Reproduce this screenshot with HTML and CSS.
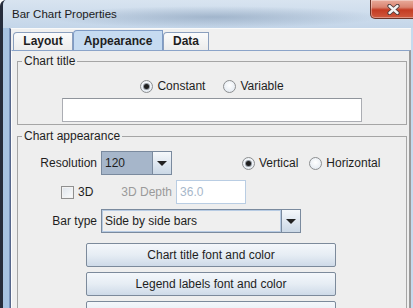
FILE: index.html
```html
<!DOCTYPE html>
<html lang="en">
<head>
    <meta charset="UTF-8">
    <title>Bar Chart Properties</title>
    <link rel="stylesheet" href="styles.css">
</head>
<body>
    <div class="window">
        <div class="titlebar">
            <span class="title">Bar Chart Properties</span>
            <button class="close" type="button">
                <svg width="13" height="11" viewBox="0 0 13 11">
                    <path d="M2.5 2 L10.5 9 M10.5 2 L2.5 9" stroke="#4a3a3a" stroke-width="4.2" stroke-linecap="round"/>
                    <path d="M2.5 2 L10.5 9 M10.5 2 L2.5 9" stroke="#f4f4f4" stroke-width="2.4" stroke-linecap="round"/>
                </svg>
            </button>
        </div>

        <div class="client">
            <div class="tabs">
                <div class="tab tab-layout">Layout</div>
                <div class="tab tab-appearance selected">Appearance</div>
                <div class="tab tab-data">Data</div>
            </div>

            <div class="pane">
                <fieldset class="group">
                    <legend>Chart title</legend>
                    <div class="radio-row">
                        <span class="opt"><span class="radio checked"></span>Constant</span>
                        <span class="opt"><span class="radio"></span>Variable</span>
                    </div>
                    <div class="title-field"></div>
                </fieldset>

                <fieldset class="group group-appearance">
                    <legend>Chart appearance</legend>

                    <div class="row row-res">
                        <span class="label">Resolution</span>
                        <div class="combo combo-res">
                            <span class="value">120</span>
                            <span class="arrow"></span>
                        </div>
                        <div class="orient">
                            <span class="opt"><span class="radio checked"></span>Vertical</span>
                            <span class="opt"><span class="radio"></span>Horizontal</span>
                        </div>
                    </div>

                    <div class="row row-3d">
                        <span class="check"></span>
                        <span class="check-label">3D</span>
                        <span class="depth-label">3D Depth</span>
                        <div class="depth-field">36.0</div>
                    </div>

                    <div class="row row-bar">
                        <span class="label">Bar type</span>
                        <div class="combo combo-bar">
                            <span class="value">Side by side bars</span>
                            <span class="arrow"></span>
                        </div>
                    </div>

                    <div class="buttons">
                        <button class="btn" type="button">Chart title font and color</button>
                        <button class="btn" type="button">Legend labels font and color</button>
                        <!-- next button is cut off by the window edge -->
                        <button class="btn" type="button"></button>
                    </div>
                </fieldset>
            </div>
        </div>
    </div>
</body>
</html>
```

FILE: styles.css
```css
* {
    box-sizing: border-box;
}
body {
    margin: 0;
    font-family: "Liberation Sans", Arial, sans-serif;
    font-size: 12px;
    color: #1e1e1e;
}
.window {
    width: 413px;
    height: 308px;
    overflow: hidden;
    border-left: 3px solid #262d3c;
    border-top-left-radius: 6px;
    background: linear-gradient(to right, #a6c3e2, #bcd3ea 30%, #c6daee);
}
.titlebar {
    height: 28px;
    display: flex;
    align-items: flex-start;
    background:
        radial-gradient(ellipse 170px 11px at 210px 17px, rgba(110,135,165,0.45), rgba(110,135,165,0)),
        linear-gradient(#d8e4f0, #c4d6e9);
}
.title {
    padding: 8px 0 0 9px;
    font-size: 11.5px;
    color: #1b1b1b;
}
.close {
    margin-left: auto;
    margin-right: -4px;
    width: 47px;
    height: 19px;
    padding: 0;
    display: flex;
    align-items: center;
    justify-content: center;
    border: 1px solid #6a3429;
    border-top: none;
    border-radius: 0 0 5px 5px;
    background: linear-gradient(#e9ab9b, #d98470 40%, #c43b22 55%, #cf5a3f);
    box-shadow: inset 0 0 0 1px rgba(255,255,255,0.35);
}
.client {
    margin-left: 7px;
    width: 401px;
    height: 280px;
    background: #f0f0f0;
    border-left: 1px solid #56668a;
    border-top: 1px solid #fafafa;
    box-shadow: -1px 0 0 #7995bd;
    padding-top: 1px;
}
.tabs {
    display: flex;
    align-items: flex-end;
    height: 20px;
    padding-left: 2px;
}
.tab {
    height: 18px;
    line-height: 17px;
    text-align: center;
    font-weight: bold;
    border: 1px solid #8b9fbd;
    border-bottom: none;
    border-top-left-radius: 4px;
    background: linear-gradient(#fbfbfb, #ececec);
}
.tab-layout {
    width: 60px;
}
.tab-appearance {
    width: 90px;
}
.tab-data {
    width: 46px;
}
.tab.selected {
    height: 20px;
    padding-top: 2px;
    background: #c6dbf1;
    border-color: #7f9bc5;
}
.pane {
    height: 258px;
    border-top: 1px solid #8ba4c9;
    border-left: 1px solid #fdfdfd;
    border-right: 2px solid #9a9a9a;
    padding: 3px 2px 0 5px;
    background: #eeeeee;
}
.group {
    margin: 0;
    padding: 0;
    width: 390px;
    border: 1px solid #a5a5a5;
}
.group legend {
    margin-left: 4px;
    padding: 0 2px;
    line-height: 14px;
}
.group-appearance {
    margin-top: 4px;
}
.radio-row {
    display: flex;
    justify-content: center;
    gap: 18px;
    margin-top: 10px;
    height: 16px;
}
.opt {
    display: flex;
    align-items: center;
    gap: 4px;
}
.radio {
    flex: none;
    width: 13px;
    height: 13px;
    border-radius: 50%;
    border: 1px solid #8c8e90;
    background: radial-gradient(circle at 50% 40%, #ffffff, #dde5ee);
    display: flex;
    align-items: center;
    justify-content: center;
}
.radio.checked::after {
    content: "";
    width: 5px;
    height: 5px;
    border-radius: 50%;
    background: #1e1e1e;
    box-shadow: 0 0 0 1px #8f979f;
}
.title-field {
    width: 300px;
    height: 24px;
    margin: 4px auto 2px;
    border: 1px solid #abadb3;
    border-top-color: #8f949b;
    background: #ffffff;
}
.row {
    display: flex;
    align-items: center;
    height: 24px;
    margin-top: 5px;
}
.row-res {
    margin-top: 8px;
}
.label {
    width: 79px;
    margin-right: 4px;
    text-align: right;
}
.combo {
    display: flex;
    height: 24px;
    border: 1px solid #7a8a9e;
}
.combo .value {
    flex: 1;
    padding-left: 3px;
    line-height: 22px;
}
.combo-res {
    width: 71px;
}
.combo-res .value {
    background: #a6b6ca;
}
.combo-bar {
    width: 200px;
}
.combo-bar .value {
    background: #efefef;
    box-shadow: inset 0 0 0 1px #b7cbe3;
}
.arrow {
    width: 19px;
    border-left: 1px solid #7a8a9e;
    background: linear-gradient(#f5f8fb, #cbd8e6);
    display: flex;
    align-items: center;
    justify-content: center;
}
.arrow::before {
    content: "";
    border-left: 5px solid transparent;
    border-right: 5px solid transparent;
    border-top: 5px solid #222;
}
.orient {
    display: flex;
    gap: 11px;
    margin-left: 70px;
}
.check {
    width: 13px;
    height: 13px;
    margin-left: 43px;
    border: 1px solid #8f8f8f;
    background: linear-gradient(135deg, #dde3ea, #fbfcfd);
    box-shadow: inset 0 0 0 1px #f2f2f2;
}
.check-label {
    margin-left: 4px;
}
.depth-label {
    margin-left: 28px;
    color: #9a9a9a;
}
.depth-field {
    width: 70px;
    height: 24px;
    margin-left: 4px;
    padding-left: 3px;
    line-height: 22px;
    border: 1px solid #b9cde3;
    background: #ffffff;
    color: #a7b7ca;
}
.buttons {
    display: flex;
    flex-direction: column;
    gap: 5px;
    margin: 10px 0 0 68px;
}
.btn {
    width: 250px;
    height: 24px;
    padding: 0;
    border: 1px solid #7c8a9b;
    border-radius: 2px;
    background: linear-gradient(#f4f7fb, #e6edf4 50%, #cedae8);
    font: inherit;
    color: #1e1e1e;
}
```
